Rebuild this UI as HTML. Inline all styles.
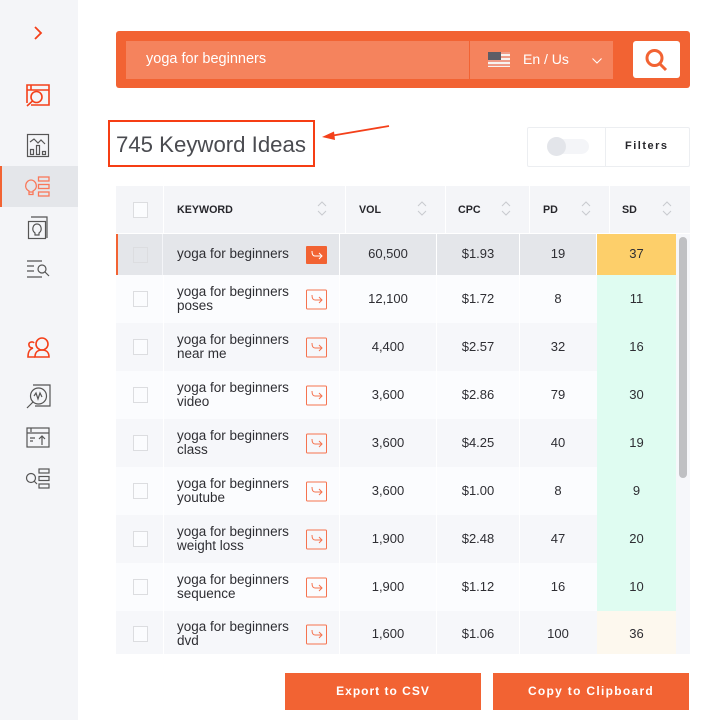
<!DOCTYPE html>
<html><head><meta charset="utf-8"><style>
*{box-sizing:border-box}
html,body{margin:0;padding:0;width:725px;height:720px;overflow:hidden;background:#fff;font-family:"Liberation Sans",sans-serif;color:#2e2e33}
.a{position:absolute}
svg{position:absolute;overflow:visible}
.c{position:absolute;text-align:center;font-size:13px;line-height:16px}
.k{position:absolute;left:177px;font-size:13.5px;line-height:14px;width:125px}
.cb{position:absolute;left:133px;width:15px;height:16px;border:1.5px solid #dcdde0;background:#fbfcfe}
.h{position:absolute;top:204px;font-size:10.7px;line-height:13px;font-weight:bold;color:#26262b}
.btn{position:absolute;top:673px;height:37px;background:#f26333;color:#fff;font-size:12px;font-weight:bold;line-height:37px;text-align:center}
</style></head><body>
<div class="a" style="left:0;top:0;width:78px;height:720px;background:#f4f5f8"></div>
<div class="a" style="left:0;top:166px;width:78px;height:41px;background:#e4e6ea"></div>
<div class="a" style="left:0;top:166px;width:2px;height:41px;background:#f26333"></div>
<svg style="left:0;top:0" width="78" height="520" fill="none" stroke-width="1.2">
<path d="M35 27l6 6-6 6" stroke="#f4401a" stroke-width="1.8"/>
<g stroke="#f4401a" stroke-width="1.6"><path d="M31 105h18V85H27v18M27 90h22M31 85v5"/><circle cx="36.500" cy="97" r="5.500"/><path d="M32.500 101l-5.500 5"/></g>
<g stroke="#555"><rect x="27.500" y="134.500" width="21" height="22"/><path d="M30 142l4-3 4 4 3-3 4 4"/><rect x="30.500" y="149.500" width="3" height="5"/><rect x="36.500" y="145.500" width="3" height="9"/><rect x="42.500" y="151.500" width="3" height="3"/></g>
<g stroke="#f9785a" stroke-width="1.3"><path d="M29 191c-6-3-3-11 2-11s8 8 2 11v1h-4zM29 192v2.500h4V192"/><rect x="38.500" y="177" width="10.500" height="4"/><rect x="38.500" y="184.500" width="10.500" height="4"/><rect x="38.500" y="192" width="10.500" height="4"/></g>
<g stroke="#555"><rect x="28.500" y="221.500" width="17" height="17"/><path d="M31 217h16v21"/><path d="M35 233c-4-3-2-9 2-9s6 6 2 9v2h-4z"/></g>
<g stroke="#555"><path d="M27 261h15M27 266h7M27 271h7M27 277h15"/><circle cx="42" cy="269" r="4"/><path d="M45 272l4 4"/></g>
<g stroke="#f4401a" stroke-width="1.6"><circle cx="42" cy="344" r="6"/><path d="M35 357c0-5 3-7 7-7s7 2 7 7z"/><path d="M34 343c-1-2-6-1-5 2 0 2 2 3 4 3-3 1-5 3-5 9h7"/></g>
<g stroke="#555"><path d="M33 385h17v21H35"/><circle cx="38.500" cy="396" r="8"/><path d="M33 402l-6 6"/><path d="M34 396l2-3 2 6 2-6 2 4"/></g>
<g stroke="#555"><rect x="27" y="428" width="22" height="19"/><path d="M27 433h22M31 428v4M30 438h5M30 441h3M42 445v-9M39 439l3-3 3 3"/></g>
<g stroke="#555"><circle cx="31" cy="478" r="4.500"/><path d="M34 481l3 3"/><rect x="39" y="469" width="10" height="4"/><rect x="39" y="476.500" width="10" height="4"/><rect x="39" y="484" width="10" height="4"/></g>
</svg>

<div class="a" style="left:116px;top:31px;width:574px;height:57px;background:#f26333;border-radius:3px"></div>
<div class="a" style="left:126px;top:41px;width:343px;height:38px;background:#f5835d"></div>
<div class="a" style="left:470px;top:41px;width:143px;height:38px;background:#f5835d"></div>
<div class="a" style="left:146px;top:50px;font-size:14.500px;line-height:18px;color:#fff">yoga for beginners</div>
<svg style="left:488px;top:52px" width="22" height="16"><rect width="22" height="15" fill="#f7f3f0"/><path d="M0 1h22M0 5h22M0 9h22M0 13h22" stroke="#e8674a" stroke-width="1.300"/><rect width="13" height="8" fill="#5d5d66"/></svg>
<div class="a" style="left:523px;top:50px;font-size:14px;line-height:18px;color:#fff">En / Us</div>
<svg style="left:592px;top:58px" width="10" height="6" fill="none"><path d="M.5.500L5 5 9.500.5" stroke="#fff"/></svg>
<div class="a" style="left:633px;top:41px;width:47px;height:37px;background:#fff;border-radius:3px"></div>
<svg style="left:645px;top:49px" width="23" height="23" fill="none" stroke="#f26333" stroke-width="3"><circle cx="9.500" cy="9" r="7.500"/><path d="M15 15l6 6"/></svg>

<div class="a" style="left:108px;top:120px;width:207px;height:47px;border:2px solid #f63e14"></div>
<div class="a" style="left:116px;top:131px;font-size:22.2px;line-height:28px;color:#4a4b50;white-space:nowrap">745 Keyword Ideas</div>
<svg style="left:320px;top:122px" width="72" height="22" fill="none"><path d="M69 4L10 14" stroke="#f4401a" stroke-width="1.800"/><path d="M2 15l12-5.500 1 8.500z" fill="#f4401a"/></svg>

<div class="a" style="left:527px;top:127px;width:163px;height:40px;border:1px solid #eceef1;border-radius:2px"></div>
<div class="a" style="left:605px;top:128px;width:1px;height:38px;background:#eceef1"></div>
<div class="a" style="left:548px;top:139px;width:41px;height:15px;background:#f4f5f8;border-radius:8px"></div>
<div class="a" style="left:547px;top:137px;width:19px;height:19px;background:#e3e5ea;border-radius:50%"></div>
<div class="a" style="left:625px;top:139px;font-size:11px;line-height:14px;font-weight:bold;letter-spacing:1.500px;color:#26262b">Filters</div>

<div class="a" style="left:116px;top:186px;width:574px;height:468px;background:#fff"></div>
<div class="a" style="left:116px;top:186px;width:574px;height:47px;background:#f4f5f8"></div>
<div class="a" style="left:163px;top:186px;width:1px;height:47px;background:#fff"></div>
<div class="a" style="left:345px;top:186px;width:1px;height:47px;background:#fff"></div>
<div class="a" style="left:445px;top:186px;width:1px;height:47px;background:#fff"></div>
<div class="a" style="left:529px;top:186px;width:1px;height:47px;background:#fff"></div>
<div class="a" style="left:609px;top:186px;width:1px;height:47px;background:#fff"></div>
<div class="cb" style="top:202px"></div>
<div class="h" style="left:177px">KEYWORD</div>
<div class="h" style="left:359px">VOL</div>
<div class="h" style="left:458px">CPC</div>
<div class="h" style="left:543px">PD</div>
<div class="h" style="left:622px">SD</div>
<svg style="left:0;top:0" width="725" height="240" fill="none" stroke="#c8cacf"><path d="M318 206l4-4 4 4M318 211l4 4 4-4"/><path d="M418 206l4-4 4 4M418 211l4 4 4-4"/><path d="M502 206l4-4 4 4M502 211l4 4 4-4"/><path d="M582 206l4-4 4 4M582 211l4 4 4-4"/><path d="M663 206l4-4 4 4M663 211l4 4 4-4"/></svg>

<div class="a" style="left:116px;top:234px;width:223px;height:41px;background:#e4e6ea"></div>
<div class="a" style="left:116px;top:234px;width:47px;height:41px;background:#e4e6ea;border-right:1px solid #f4f5f8"></div>
<div class="a" style="left:116px;top:234px;width:2px;height:41px;background:#f26333"></div>
<div class="a" style="left:340px;top:234px;width:96px;height:41px;background:#e4e6ea"></div>
<div class="a" style="left:437px;top:234px;width:82px;height:41px;background:#e4e6ea"></div>
<div class="a" style="left:520px;top:234px;width:76px;height:41px;background:#e4e6ea"></div>
<div class="a" style="left:597px;top:234px;width:79px;height:41px;background:#fdcf6a"></div>

<div class="a" style="left:116px;top:275px;width:481px;height:48px;background:#fbfcfe"></div>
<div class="a" style="left:116px;top:323px;width:481px;height:48px;background:#f6f7fa"></div>
<div class="a" style="left:116px;top:371px;width:481px;height:48px;background:#fbfcfe"></div>
<div class="a" style="left:116px;top:419px;width:481px;height:48px;background:#f6f7fa"></div>
<div class="a" style="left:116px;top:467px;width:481px;height:48px;background:#fbfcfe"></div>
<div class="a" style="left:116px;top:515px;width:481px;height:48px;background:#f6f7fa"></div>
<div class="a" style="left:116px;top:563px;width:481px;height:48px;background:#fbfcfe"></div>
<div class="a" style="left:116px;top:611px;width:481px;height:43px;background:#f6f7fa"></div>
<div class="a" style="left:163px;top:275px;width:1px;height:379px;background:#fff"></div>
<div class="a" style="left:339px;top:275px;width:1px;height:379px;background:#fff"></div>
<div class="a" style="left:436px;top:275px;width:1px;height:379px;background:#fff"></div>
<div class="a" style="left:519px;top:275px;width:1px;height:379px;background:#fff"></div>
<div class="a" style="left:597px;top:275px;width:79px;height:336px;background:#dffcf1"></div>
<div class="a" style="left:597px;top:611px;width:79px;height:43px;background:#fdf8ee"></div>
<div class="a" style="left:676px;top:234px;width:14px;height:420px;background:#f6f7fa"></div>
<div class="a" style="left:679px;top:237px;width:8px;height:241px;background:#bfc0c3;border-radius:4px"></div>

<div class="cb" style="top:247px;background:#e4e6ea"></div>
<div class="cb" style="top:291px"></div>
<div class="cb" style="top:339px"></div>
<div class="cb" style="top:387px"></div>
<div class="cb" style="top:435px"></div>
<div class="cb" style="top:483px"></div>
<div class="cb" style="top:531px"></div>
<div class="cb" style="top:579px"></div>
<div class="cb" style="top:626px"></div>

<div class="k" style="top:247px">yoga for beginners</div>
<div class="k" style="top:285px">yoga for beginners<br>poses</div>
<div class="k" style="top:333px">yoga for beginners<br>near me</div>
<div class="k" style="top:381px">yoga for beginners<br>video</div>
<div class="k" style="top:429px">yoga for beginners<br>class</div>
<div class="k" style="top:477px">yoga for beginners<br>youtube</div>
<div class="k" style="top:525px">yoga for beginners<br>weight loss</div>
<div class="k" style="top:573px">yoga for beginners<br>sequence</div>
<div class="k" style="top:620px">yoga for beginners<br>dvd</div>

<svg style="left:0;top:0" width="340" height="660" fill="none">
<rect x="306" y="246" width="21" height="18" rx="1" fill="#f26333"/><path d="M312 251c0 3 1 5 3 5h7M319 253l3 3-3 3" stroke="#fff"/>
<g stroke="#f5734f"><rect x="306.500" y="290" width="20" height="19" rx="1"/><path d="M312 295c0 3 1 5 3 5h7M319 297l3 3-3 3"/>
<rect x="306.500" y="338" width="20" height="19" rx="1"/><path d="M312 343c0 3 1 5 3 5h7M319 345l3 3-3 3"/>
<rect x="306.500" y="386" width="20" height="19" rx="1"/><path d="M312 391c0 3 1 5 3 5h7M319 393l3 3-3 3"/>
<rect x="306.500" y="434" width="20" height="19" rx="1"/><path d="M312 439c0 3 1 5 3 5h7M319 441l3 3-3 3"/>
<rect x="306.500" y="482" width="20" height="19" rx="1"/><path d="M312 487c0 3 1 5 3 5h7M319 489l3 3-3 3"/>
<rect x="306.500" y="530" width="20" height="19" rx="1"/><path d="M312 535c0 3 1 5 3 5h7M319 537l3 3-3 3"/>
<rect x="306.500" y="578" width="20" height="19" rx="1"/><path d="M312 583c0 3 1 5 3 5h7M319 585l3 3-3 3"/>
<rect x="306.500" y="625" width="20" height="19" rx="1"/><path d="M312 630c0 3 1 5 3 5h7M319 632l3 3-3 3"/></g>
</svg>

<div class="c" style="left:340px;top:246px;width:96px">60,500</div><div class="c" style="left:437px;top:246px;width:82px">$1.93</div><div class="c" style="left:520px;top:246px;width:76px">19</div><div class="c" style="left:597px;top:246px;width:79px">37</div>
<div class="c" style="left:340px;top:291px;width:96px">12,100</div><div class="c" style="left:437px;top:291px;width:82px">$1.72</div><div class="c" style="left:520px;top:291px;width:76px">8</div><div class="c" style="left:597px;top:291px;width:79px">11</div>
<div class="c" style="left:340px;top:339px;width:96px">4,400</div><div class="c" style="left:437px;top:339px;width:82px">$2.57</div><div class="c" style="left:520px;top:339px;width:76px">32</div><div class="c" style="left:597px;top:339px;width:79px">16</div>
<div class="c" style="left:340px;top:387px;width:96px">3,600</div><div class="c" style="left:437px;top:387px;width:82px">$2.86</div><div class="c" style="left:520px;top:387px;width:76px">79</div><div class="c" style="left:597px;top:387px;width:79px">30</div>
<div class="c" style="left:340px;top:435px;width:96px">3,600</div><div class="c" style="left:437px;top:435px;width:82px">$4.25</div><div class="c" style="left:520px;top:435px;width:76px">40</div><div class="c" style="left:597px;top:435px;width:79px">19</div>
<div class="c" style="left:340px;top:483px;width:96px">3,600</div><div class="c" style="left:437px;top:483px;width:82px">$1.00</div><div class="c" style="left:520px;top:483px;width:76px">8</div><div class="c" style="left:597px;top:483px;width:79px">9</div>
<div class="c" style="left:340px;top:531px;width:96px">1,900</div><div class="c" style="left:437px;top:531px;width:82px">$2.48</div><div class="c" style="left:520px;top:531px;width:76px">47</div><div class="c" style="left:597px;top:531px;width:79px">20</div>
<div class="c" style="left:340px;top:579px;width:96px">1,900</div><div class="c" style="left:437px;top:579px;width:82px">$1.12</div><div class="c" style="left:520px;top:579px;width:76px">16</div><div class="c" style="left:597px;top:579px;width:79px">10</div>
<div class="c" style="left:340px;top:626px;width:96px">1,600</div><div class="c" style="left:437px;top:626px;width:82px">$1.06</div><div class="c" style="left:520px;top:626px;width:76px">100</div><div class="c" style="left:597px;top:626px;width:79px">36</div>

<div class="btn" style="left:285px;width:196px;letter-spacing:1px">Export to CSV</div>
<div class="btn" style="left:493px;width:196px;letter-spacing:1.3px">Copy to Clipboard</div>
</body></html>
